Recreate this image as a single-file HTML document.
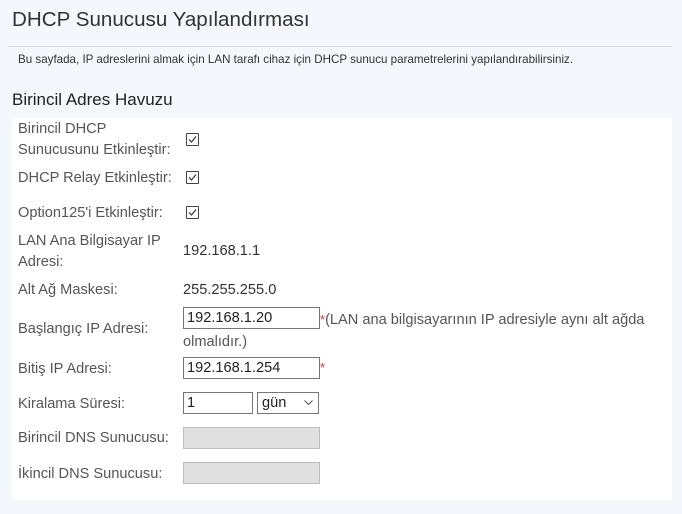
<!DOCTYPE html>
<html><head><meta charset="utf-8"><style>
body{margin:0;width:682px;height:514px;background:#f4f7fb;font-family:"Liberation Sans","DejaVu Sans",sans-serif;position:relative;overflow:hidden;color:#555}
.a{position:absolute;white-space:nowrap}
h1{position:absolute;left:12px;top:8px;margin:0;font-weight:normal;font-size:20.6px;color:#333}
.hr{position:absolute;left:8px;width:664px;top:46px;height:1px;background:#dde1e6}
.desc{left:18px;top:53px;font-size:11.6px;color:#333}
h2{position:absolute;left:12px;top:90px;margin:0;font-weight:normal;font-size:17px;color:#222}
.panel{position:absolute;left:12px;top:118px;width:660px;height:382px;background:#fff}
.l{font-size:14.6px;color:#555;line-height:21px;left:18px}
.v{font-size:14.6px;color:#333;left:183px}
.cb{position:absolute;left:186px;width:11px;height:11px;border:1px solid #444;border-radius:1px}
.cb svg{position:absolute;left:0;top:0}
.in{position:absolute;left:183px;height:22px;border:1px solid #767676;box-sizing:border-box;font-size:14.6px;color:#222;padding-left:3px;line-height:20px;background:#fff}
.dis{background:#e0e0e0;border-color:#bdbdbd}
.st{color:#d33;font-size:13px}
</style></head><body>
<h1>DHCP Sunucusu Yapılandırması</h1>
<div class="hr"></div>
<div class="a desc">Bu sayfada, IP adreslerini almak için LAN tarafı cihaz için DHCP sunucu parametrelerini yapılandırabilirsiniz.</div>
<h2>Birincil Adres Havuzu</h2>
<div class="panel"></div>
<div class="a l" style="top:119px">Birincil DHCP<br>Sunucusunu Etkinleştir:</div>
<div class="cb" style="top:133px"><svg width="11" height="11"><path d="M2 5.5L4.5 8L9 2.5" fill="none" stroke="#333" stroke-width="1.2"/></svg></div>
<div class="a l" style="top:168px">DHCP Relay Etkinleştir:</div>
<div class="cb" style="top:171px"><svg width="11" height="11"><path d="M2 5.5L4.5 8L9 2.5" fill="none" stroke="#333" stroke-width="1.2"/></svg></div>
<div class="a l" style="top:203px">Option125'i Etkinleştir:</div>
<div class="cb" style="top:206px"><svg width="11" height="11"><path d="M2 5.5L4.5 8L9 2.5" fill="none" stroke="#333" stroke-width="1.2"/></svg></div>
<div class="a l" style="top:231px">LAN Ana Bilgisayar IP<br>Adresi:</div>
<div class="a v" style="top:243px">192.168.1.1</div>
<div class="a l" style="top:280px">Alt Ağ Maskesi:</div>
<div class="a v" style="top:282px">255.255.255.0</div>
<div class="a l" style="top:319px">Başlangıç IP Adresi:</div>
<div class="in" style="top:307px;width:137px">192.168.1.20</div>
<div class="a" style="left:320px;top:309px;font-size:14.6px;color:#555;line-height:22px;white-space:nowrap"><span class="st">*</span>(LAN ana bilgisayarının IP adresiyle aynı alt ağda<br><span style="margin-left:-137px">olmalıdır.)</span></div>
<div class="a l" style="top:359px">Bitiş IP Adresi:</div>
<div class="in" style="top:357px;width:137px">192.168.1.254</div>
<div class="a st" style="left:320px;top:360px">*</div>
<div class="a l" style="top:394px">Kiralama Süresi:</div>
<div class="in" style="top:392px;width:70px">1</div>
<div class="in" style="left:257px;top:392px;width:62px;height:22px;padding-left:4px">gün<svg style="position:absolute;right:5px;top:7px" width="9" height="6"><path d="M0.5 0.5L4.5 4.5L8.5 0.5" fill="none" stroke="#555"/></svg></div>
<div class="a l" style="top:428px">Birincil DNS Sunucusu:</div>
<div class="in dis" style="top:427px;width:137px"></div>
<div class="a l" style="top:464px">İkincil DNS Sunucusu:</div>
<div class="in dis" style="top:462px;width:137px"></div>
</body></html>
